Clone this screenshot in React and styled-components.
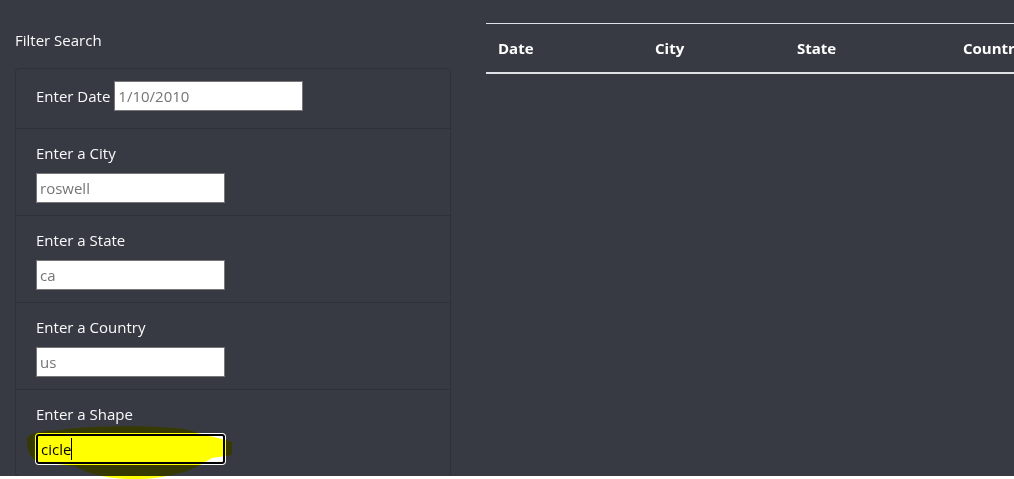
import React from "react";
import styled, { createGlobalStyle } from "styled-components";

const GlobalStyle = createGlobalStyle`
  body {
    margin: 0;
    background: #fff;
    overflow: hidden;
    font-family: "Open Sans", "Noto Sans", sans-serif;
  }
`;

const Screen = styled.div`
  position: relative;
  width: 1014px;
  height: 479px;
`;

const Page = styled.div`
  display: grid;
  grid-template-columns: 436px 1fr;
  column-gap: 35px;
  height: 476px;
  padding-left: 15px;
  background-color: #373a43;
  color: #f8f9fa;
  overflow: hidden;
`;

const Sidebar = styled.div`
  padding-top: 28px;
`;

const Title = styled.div`
  font-size: 15px;
  line-height: 24px;
  margin-bottom: 16px;
`;

const Panel = styled.div`
  border: 1px solid #2e3138;
  border-radius: 4px;
`;

const Item = styled.div`
  display: ${(p) => (p.inline ? "flex" : "block")};
  align-items: center;
  gap: 4px;
  padding: ${(p) => (p.inline ? "12px 20px 17px" : "12px 20px")};
  border-bottom: 1px solid #2e3138;
  &:last-child {
    border-bottom: none;
  }
`;

const Label = styled.label`
  display: ${(p) => (p.inline ? "inline" : "block")};
  font-size: 15px;
  line-height: 24px;
  margin-bottom: ${(p) => (p.inline ? "0" : "8px")};
`;

const Field = styled.div`
  position: relative;
  width: 189px;
  height: 30px;
`;

const Input = styled.input`
  box-sizing: border-box;
  width: 100%;
  height: 100%;
  padding: 0 3px;
  font-family: "Open Sans", sans-serif;
  font-size: 15px;
  color: #000;
  background: #fff;
  border: ${(p) => (p.focused ? "2px solid #000" : "1px solid #767676")};
  border-radius: ${(p) => (p.focused ? "3px" : "0")};
  box-shadow: ${(p) => (p.focused ? "0 0 0 1px #fff" : "none")};
  outline: none;
  &::placeholder {
    color: #757575;
  }
`;

const Caret = styled.span`
  position: absolute;
  left: 35px;
  top: 4px;
  width: 1px;
  height: 22px;
  background: #000;
`;

const Right = styled.div`
  padding-top: 23px;
  min-width: 0;
`;

const Table = styled.table`
  border-collapse: collapse;
  table-layout: fixed;
  width: ${(p) => p.w}px;
`;

const Th = styled.th`
  box-sizing: border-box;
  width: ${(p) => p.w}px;
  padding: 12px;
  text-align: left;
  font-size: 15px;
  line-height: 24px;
  font-weight: 700;
  color: #fff;
  white-space: nowrap;
  border-top: 1px solid #dee2e6;
  border-bottom: 2px solid #dee2e6;
`;

const Marker = styled.svg`
  position: absolute;
  left: 0;
  top: 0;
  pointer-events: none;
  mix-blend-mode: multiply;
`;

const fields = [
  { label: "Enter a City", placeholder: "roswell" },
  { label: "Enter a State", placeholder: "ca" },
  { label: "Enter a Country", placeholder: "us" },
];

const columns = [
  { name: "Date", w: 157 },
  { name: "City", w: 142 },
  { name: "State", w: 166 },
  { name: "Country", w: 160 },
];

const tableWidth = columns.reduce((sum, c) => sum + c.w, 0);

export default function App() {
  return (
    <Screen>
      <GlobalStyle />
      <Page>
        <Sidebar>
          <Title>Filter Search</Title>
          <Panel>
            <Item inline>
              <Label inline htmlFor="date">Enter Date</Label>
              <Field>
                <Input id="date" type="text" placeholder="1/10/2010" />
              </Field>
            </Item>
            {fields.map((f) => (
              <Item key={f.label}>
                <Label>{f.label}</Label>
                <Field>
                  <Input type="text" placeholder={f.placeholder} />
                </Field>
              </Item>
            ))}
            <Item>
              <Label>Enter a Shape</Label>
              <Field>
                <Input type="text" focused defaultValue="cicle" />
                <Caret />
              </Field>
            </Item>
          </Panel>
        </Sidebar>
        <Right>
          <Table w={tableWidth}>
            <thead>
              <tr>
                {columns.map((c) => (
                  <Th key={c.name} w={c.w}>
                    {c.name}
                  </Th>
                ))}
              </tr>
            </thead>
          </Table>
        </Right>
      </Page>
      <Marker width="1014" height="479" viewBox="0 0 1014 479">
        <path
          fill="#ffff00"
          d="M27 440 C27 432 45 431 60 430 C80 426 160 424 190 430 L197 433 L226 440 L232 442 L232 455 L212 458 L200 465 C190 472 160 480 130 479 C100 478 85 472 75 466 L40 462 C30 458 27 452 27 440 Z"
        />
      </Marker>
    </Screen>
  );
}
